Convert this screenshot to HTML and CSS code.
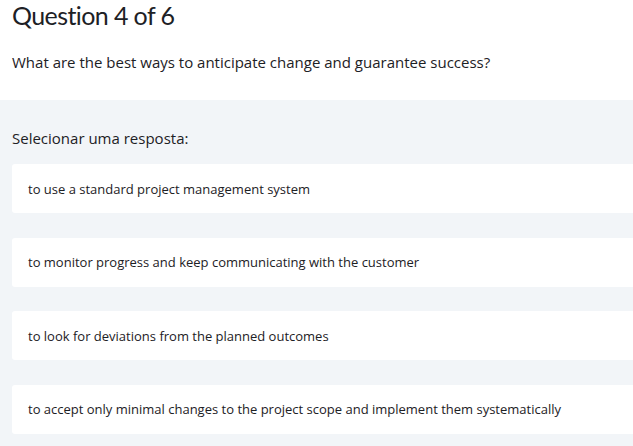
FILE: index.html
```html
<!DOCTYPE html>
<html>
<head>
<meta charset="utf-8">
<link rel="stylesheet" href="styles.css">
</head>
<body>
<div class="page">
  <header class="head">
    <h3 class="title">Question 4 of 6</h3>
    <p class="qtext">What are the best ways to anticipate change and guarantee success?</p>
  </header>
  <section class="answers">
    <p class="prompt">Selecionar uma resposta:</p>
    <div class="list">
      <div class="opt">to use a standard project management system</div>
      <div class="opt">to monitor progress and keep communicating with the customer</div>
      <div class="opt">to look for deviations from the planned outcomes</div>
      <div class="opt">to accept only minimal changes to the project scope and implement them systematically</div>
    </div>
  </section>
</div>
</body>
</html>
```
FILE: styles.css
```css
html, body {
  margin: 0;
  padding: 0;
  background: #ffffff;
}
body {
  font-family: "Open Sans", "Noto Sans", sans-serif;
  color: #1d2125;
  width: 633px;
  height: 446px;
  overflow: hidden;
}
.head {
  padding: 0 12px;
  height: 100px;
  box-sizing: border-box;
}
.title {
  margin: 0;
  font-family: Lato, "Open Sans", sans-serif;
  font-variant-ligatures: none;
  font-weight: 400;
  font-size: 25px;
  line-height: 30px;
  letter-spacing: -0.6px;
}
.qtext {
  margin: 21px 0 0;
  font-size: 15px;
  line-height: 22px;
}
.answers {
  background: #f2f5f8;
  padding: 27px 0 20px 12px;
  height: 346px;
  box-sizing: border-box;
}
.prompt {
  margin: 0;
  font-size: 15px;
  line-height: 22px;
}
.list {
  margin-top: 15px;
  display: flex;
  flex-direction: column;
  gap: 24.67px;
  margin-right: -10px;
}
.opt {
  background: #ffffff;
  border-radius: 3px;
  height: 49px;
  box-sizing: border-box;
  padding: 0 16px;
  display: flex;
  align-items: center;
  font-size: 13px;
}
```
